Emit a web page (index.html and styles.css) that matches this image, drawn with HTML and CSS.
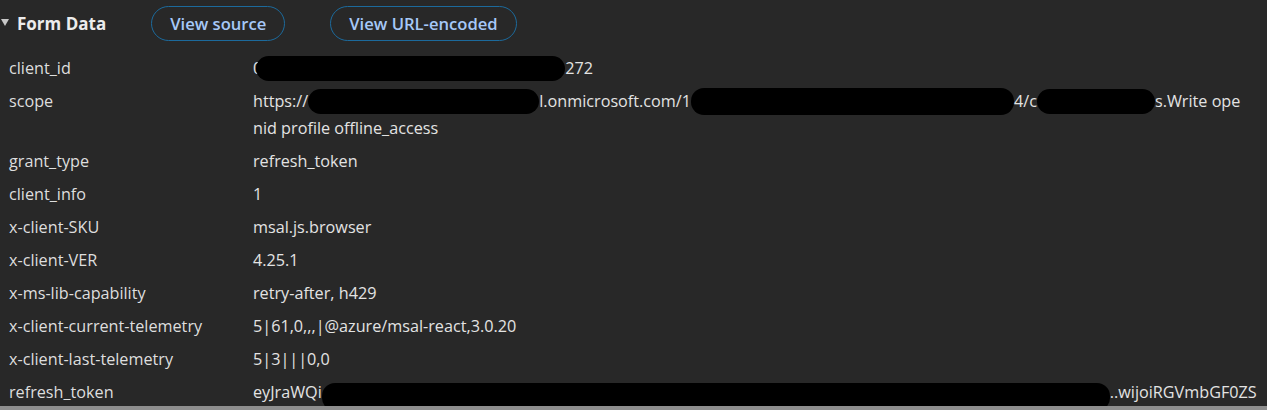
FILE: index.html
```html
<!DOCTYPE html>
<html>
<head>
<meta charset="utf-8">
<link rel="stylesheet" href="styles.css">
</head>
<body>
<div class="panel">
  <div class="header">
    <div class="title"><span class="caret"></span>Form Data</div>
    <button class="pill">View source</button>
    <button class="pill">View URL-encoded</button>
  </div>
  <div class="rows">
    <div class="row">
      <div class="key">client_id</div>
      <div class="val"><div class="line"><span>0</span><span class="redact r-cid"></span><span>272</span></div></div>
    </div>
    <div class="row">
      <div class="key">scope</div>
      <div class="val">
        <div class="line"><span>https://</span><span class="redact r-s1"></span><span>l.onmicrosoft.com/1</span><span class="redact r-s2"></span><span>4/c</span><span class="redact r-s3"></span><span>s.Write ope</span></div>
        <div class="line">nid profile offline_access</div>
      </div>
    </div>
    <div class="row"><div class="key">grant_type</div><div class="val"><div class="line">refresh_token</div></div></div>
    <div class="row"><div class="key">client_info</div><div class="val"><div class="line">1</div></div></div>
    <div class="row"><div class="key">x-client-SKU</div><div class="val"><div class="line">msal.js.browser</div></div></div>
    <div class="row"><div class="key">x-client-VER</div><div class="val"><div class="line">4.25.1</div></div></div>
    <div class="row"><div class="key">x-ms-lib-capability</div><div class="val"><div class="line">retry-after, h429</div></div></div>
    <div class="row"><div class="key">x-client-current-telemetry</div><div class="val"><div class="line">5|61,0,,,|@azure/msal-react,3.0.20</div></div></div>
    <div class="row"><div class="key">x-client-last-telemetry</div><div class="val"><div class="line">5|3|||0,0</div></div></div>
    <div class="row">
      <div class="key">refresh_token</div>
      <div class="val"><div class="line tok"><span>eyJraWQi</span><span class="redact r-tok"></span><span>..wijoiRGVmbGF0ZS</span></div></div>
    </div>
  </div>
</div>
<div class="bottom-bar"></div>
</body>
</html>
```
FILE: styles.css
```css
html, body {
  margin: 0;
  padding: 0;
  background: #282828;
  width: 1267px;
  height: 410px;
  overflow: hidden;
}
body {
  font-family: "Open Sans", "Noto Sans", sans-serif;
  font-size: 16.2px;
  color: #e3e3e3;
}
.panel {
  height: 406px;
  overflow: hidden;
}
.header {
  display: flex;
  align-items: center;
  height: 52px;
  box-sizing: border-box;
  padding: 6px 0 11px 0;
  gap: 45px;
}
.title {
  display: flex;
  align-items: center;
  font-weight: 700;
  font-size: 17px;
  color: #ececec;
}
.caret {
  width: 0;
  height: 0;
  border-left: 4.5px solid transparent;
  border-right: 4.5px solid transparent;
  border-top: 7px solid #c8c8c8;
  margin: 0 8px 3px 1px;
}
.pill {
  height: 35px;
  box-sizing: border-box;
  padding: 0 18px;
  border-radius: 18px;
  border: 1px solid #1c6a9c;
  background: transparent;
  color: #a6c8f8;
  font-family: "Open Sans", "Noto Sans", sans-serif;
  font-weight: 600;
  font-size: 16.6px;
}
.rows {
  display: flex;
  flex-direction: column;
}
.row {
  display: flex;
  padding: 3px 0;
}
.key {
  width: 244px;
  flex: none;
  padding-left: 9px;
  color: #dedede;
  height: 27px;
  line-height: 27px;
}
.val {
  flex: 1;
  min-width: 0;
}
.line {
  display: flex;
  align-items: center;
  height: 27px;
  line-height: 27px;
  white-space: nowrap;
}
.redact {
  display: inline-block;
  flex: none;
  background: #000;
  height: 25px;
  border-radius: 13px;
}
.r-cid { width: 309px; margin-left: -6px; }
.r-s1 { width: 231px; }
.r-s2 { width: 323px; height: 27px; }
.r-s3 { width: 118px; }
.r-tok { width: 788px; height: 28px; margin-top: 8px; }
.bottom-bar {
  height: 4px;
  background: #8e8e8e;
}
```
